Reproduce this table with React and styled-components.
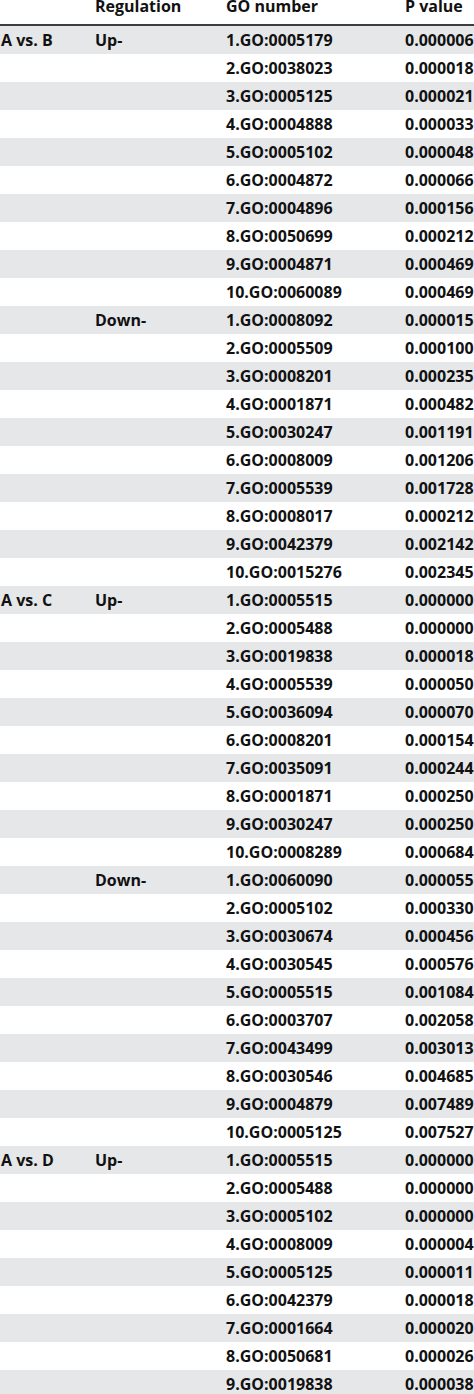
import React from "react";
import styled, { createGlobalStyle } from "styled-components";

const GlobalStyle = createGlobalStyle`
  html, body {
    margin: 0;
    padding: 0;
    background: #ffffff;
    overflow: hidden;
  }
  body {
    font-family: "Open Sans", "Noto Sans", "DejaVu Sans", sans-serif;
    color: #111111;
  }
`;

const Table = styled.div`
  width: 520px;
  display: flex;
  flex-direction: column;
`;

const HeaderRow = styled.div`
  display: grid;
  grid-template-columns: 95px 131px 179px 1fr;
  height: 24px;
  border-bottom: 2px solid #3d3d3d;
  align-items: start;
  font-size: 16px;
  font-weight: 700;
  line-height: 13px;
`;

const Row = styled.div`
  display: grid;
  grid-template-columns: 95px 131px 179px 1fr;
  height: 28px;
  align-items: center;
  background: ${(p) => (p.$shaded ? "#e6e7e9" : "#ffffff")};
  font-size: 16px;
  font-weight: 700;
  line-height: 21px;
`;

const Cell = styled.div`
  padding-left: ${(p) => (p.$first ? "1px" : "0")};
  white-space: nowrap;
`;

const groups = [
  {
    comp: "A vs. B",
    reg: "Up-",
    items: [
      ["GO:0005179", "0.000006"],
      ["GO:0038023", "0.000018"],
      ["GO:0005125", "0.000021"],
      ["GO:0004888", "0.000033"],
      ["GO:0005102", "0.000048"],
      ["GO:0004872", "0.000066"],
      ["GO:0004896", "0.000156"],
      ["GO:0050699", "0.000212"],
      ["GO:0004871", "0.000469"],
      ["GO:0060089", "0.000469"],
    ],
  },
  {
    comp: "",
    reg: "Down-",
    items: [
      ["GO:0008092", "0.000015"],
      ["GO:0005509", "0.000100"],
      ["GO:0008201", "0.000235"],
      ["GO:0001871", "0.000482"],
      ["GO:0030247", "0.001191"],
      ["GO:0008009", "0.001206"],
      ["GO:0005539", "0.001728"],
      ["GO:0008017", "0.000212"],
      ["GO:0042379", "0.002142"],
      ["GO:0015276", "0.002345"],
    ],
  },
  {
    comp: "A vs. C",
    reg: "Up-",
    items: [
      ["GO:0005515", "0.000000"],
      ["GO:0005488", "0.000000"],
      ["GO:0019838", "0.000018"],
      ["GO:0005539", "0.000050"],
      ["GO:0036094", "0.000070"],
      ["GO:0008201", "0.000154"],
      ["GO:0035091", "0.000244"],
      ["GO:0001871", "0.000250"],
      ["GO:0030247", "0.000250"],
      ["GO:0008289", "0.000684"],
    ],
  },
  {
    comp: "",
    reg: "Down-",
    items: [
      ["GO:0060090", "0.000055"],
      ["GO:0005102", "0.000330"],
      ["GO:0030674", "0.000456"],
      ["GO:0030545", "0.000576"],
      ["GO:0005515", "0.001084"],
      ["GO:0003707", "0.002058"],
      ["GO:0043499", "0.003013"],
      ["GO:0030546", "0.004685"],
      ["GO:0004879", "0.007489"],
      ["GO:0005125", "0.007527"],
    ],
  },
  {
    comp: "A vs. D",
    reg: "Up-",
    items: [
      ["GO:0005515", "0.000000"],
      ["GO:0005488", "0.000000"],
      ["GO:0005102", "0.000000"],
      ["GO:0008009", "0.000004"],
      ["GO:0005125", "0.000011"],
      ["GO:0042379", "0.000018"],
      ["GO:0001664", "0.000020"],
      ["GO:0050681", "0.000026"],
      ["GO:0019838", "0.000038"],
    ],
  },
];

const rows = [];
groups.forEach((g) => {
  g.items.forEach(([go, p], i) => {
    rows.push({
      comp: i === 0 ? g.comp : "",
      reg: i === 0 ? g.reg : "",
      go: `${i + 1}.${go}`,
      p,
    });
  });
});

export default function App() {
  return (
    <>
      <GlobalStyle />
      <Table>
        <HeaderRow>
          <Cell $first></Cell>
          <Cell>Regulation</Cell>
          <Cell>GO number</Cell>
          <Cell>P value</Cell>
        </HeaderRow>
        {rows.map((r, idx) => (
          <Row key={idx} $shaded={idx % 2 === 0}>
            <Cell $first>{r.comp}</Cell>
            <Cell>{r.reg}</Cell>
            <Cell>{r.go}</Cell>
            <Cell>{r.p}</Cell>
          </Row>
        ))}
      </Table>
    </>
  );
}
